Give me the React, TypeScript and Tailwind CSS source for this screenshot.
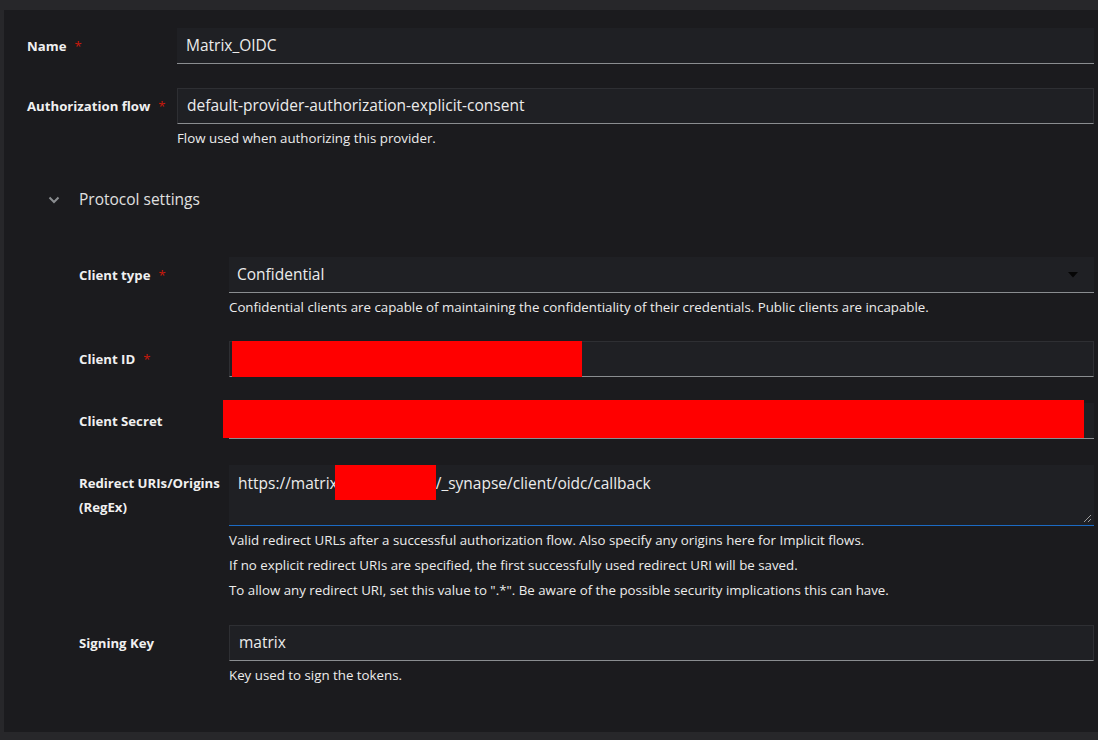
import React from "react"

const font = { fontFamily: '"Open Sans", "Noto Sans", sans-serif' }

function Req() {
  return <span className="ml-[8px] text-[#c9190b] font-normal">*</span>
}

function Label({ text, required }: { text: React.ReactNode; required?: boolean }) {
  return (
    <div className="w-[150px] shrink-0 pt-[6px] whitespace-nowrap text-[13.2px] leading-[24px] font-bold text-[#f0f0f0]">
      {text}
      {required && <Req />}
    </div>
  )
}

function Helper({ lines }: { lines: string[] }) {
  return (
    <div className="flex flex-col gap-[4px] pt-[4px]">
      {lines.map((l, i) => (
        <div key={i} className="text-[13.3px] leading-[21px] text-[#ececec]">
          {l}
        </div>
      ))}
    </div>
  )
}

function TextInput({ value, bordered, children }: { value?: string; bordered?: boolean; children?: React.ReactNode }) {
  return (
    <div
      className={`relative h-[36px] bg-[#1f2024] border-b border-b-[#8a8d90] flex items-center pl-[9px] text-[15.5px] text-[#ececec] ${
        bordered ? "border-t border-x border-t-[#2e2f33] border-x-[#2e2f33]" : ""
      }`}
    >
      {value}
      {children}
    </div>
  )
}

function Row({ label, required, children }: { label: React.ReactNode; required?: boolean; children: React.ReactNode }) {
  return (
    <div className="flex">
      <Label text={label} required={required} />
      <div className="flex-1 min-w-0">{children}</div>
    </div>
  )
}

export default function App() {
  return (
    <div className="w-[1098px] h-[740px] bg-[#27272a] pl-[4px] pt-[10px] overflow-hidden" style={font}>
      <div className="h-[722px] bg-[#1b1b1e] pl-[23px] pr-[4px] pt-[18px]">
        <div className="flex flex-col gap-[24px]">
          <Row label="Name" required>
            <TextInput value="Matrix_OIDC" />
          </Row>
          <Row label="Authorization flow" required>
            <TextInput value="default-provider-authorization-explicit-consent" bordered />
            <Helper lines={["Flow used when authorizing this provider."]} />
          </Row>
        </div>

        <div className="mt-[39px] flex items-center h-[24px]">
          <div className="w-[52px] flex justify-center pl-[2px]">
            <svg width="12" height="8" viewBox="0 0 12 8">
              <path d="M1.5 1.5 L6 6 L10.5 1.5" fill="none" stroke="#8a8d90" strokeWidth="2" />
            </svg>
          </div>
          <span className="text-[15.5px] text-[#e0e0e0]">Protocol settings</span>
        </div>

        <div className="mt-[45px] pl-[52px] flex flex-col gap-[23px]">
          <Row label="Client type" required>
            <div className="relative h-[36px] bg-[#1f2024] border-b border-b-[#8a8d90] flex items-center pl-[8px] text-[15.5px] text-[#ececec]">
              Confidential
              <svg className="absolute right-[16px] top-[15px]" width="10" height="6" viewBox="0 0 10 6">
                <path d="M0 0 H10 L5 5.5 Z" fill="#050505" />
              </svg>
            </div>
            <Helper lines={["Confidential clients are capable of maintaining the confidentiality of their credentials. Public clients are incapable."]} />
          </Row>
          <Row label="Client ID" required>
            <TextInput bordered>
              <div className="absolute left-[2px] top-[-1px] w-[350px] h-[36px] bg-[#ff0000]" />
            </TextInput>
          </Row>
          <div className="mt-[3px]">
            <Row label="Client Secret">
              <TextInput>
                <div className="absolute left-[-6px] top-[-3px] w-[861px] h-[38px] bg-[#ff0000]" />
              </TextInput>
            </Row>
          </div>
          <div className="mt-[3px]">
            <Row label={<>Redirect URIs/Origins<br />(RegEx)</>}>
              <div className="relative h-[61px] bg-[#1f2024] border-b border-b-[#1c6bc4] pl-[9px] pt-[6px] text-[15.5px] leading-[24px] text-[#ececec]">
                https://matrix<span className="inline-block w-[98px]" />/_synapse/client/oidc/callback
                <div className="absolute left-[106px] top-0 w-[101px] h-[35px] bg-[#ff0000]" />
                <svg className="absolute right-[2px] bottom-[2px]" width="9" height="9" viewBox="0 0 9 9">
                  <path d="M8 1 L1 8 M8 5 L5 8" stroke="#9a9a9a" strokeWidth="1" />
                </svg>
              </div>
              <Helper
                lines={[
                  "Valid redirect URLs after a successful authorization flow. Also specify any origins here for Implicit flows.",
                  "If no explicit redirect URIs are specified, the first successfully used redirect URI will be saved.",
                  'To allow any redirect URI, set this value to ".*". Be aware of the possible security implications this can have.',
                ]}
              />
            </Row>
          </div>
          <div className="mt-[1px]">
            <Row label="Signing Key">
              <TextInput value="matrix" bordered />
              <Helper lines={["Key used to sign the tokens."]} />
            </Row>
          </div>
        </div>
      </div>
    </div>
  )
}
